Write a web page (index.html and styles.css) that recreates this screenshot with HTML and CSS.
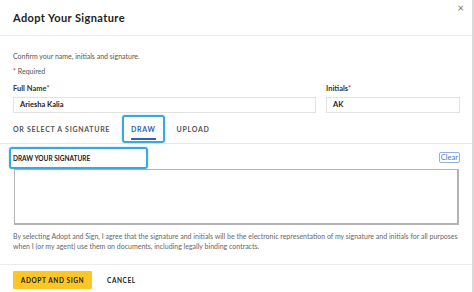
FILE: index.html
```
<!DOCTYPE html>
<html lang="en">
<head>
    <meta charset="UTF-8">
    <meta name="viewport" content="width=device-width, initial-scale=1.0">
    <title>Adopt Your Signature</title>
    <link rel="stylesheet" href="styles.css">
</head>
<body>

    <div class="modal">

        <div class="modal-header">
            <h1>Adopt Your Signature</h1>
            <span class="close">&times;</span>
        </div>

        <div class="modal-body">
            <p class="intro">Confirm your name, initials and signature.</p>
            <p class="required"><span class="star">*</span> Required</p>

            <div class="fields">
                <div class="field field-name">
                    <label>Full Name<span class="star">*</span></label>
                    <div class="input">Ariesha Kalia</div>
                </div>
                <div class="field field-initials">
                    <label>Initials<span class="star">*</span></label>
                    <div class="input">AK</div>
                </div>
            </div>

            <div class="tabs">
                <span class="tab-title">OR SELECT A SIGNATURE</span>
                <span class="tab active">DRAW</span>
                <span class="tab">UPLOAD</span>
            </div>

            <div class="draw-head">
                <span class="draw-label">DRAW YOUR SIGNATURE</span>
                <span class="clear">Clear</span>
            </div>
            <div class="canvas"></div>

            <p class="legal">By selecting Adopt and Sign, I agree that the signature and initials will be the electronic representation of my signature and initials for all purposes when I (or my agent) use them on documents, including legally binding contracts.</p>
        </div>

        <div class="modal-footer">
            <button class="btn-primary">ADOPT AND SIGN</button>
            <button class="btn-link">CANCEL</button>
        </div>

    </div>

</body>
</html>
```

FILE: styles.css
```
body {
    margin: 0;
    background-color: #fff;
    font-family: Lato, "Noto Sans", sans-serif;
    color: #333;
}

.modal {
    width: 472px;
    height: 292px;
    border-right: 2px solid #d9d9d9;
    position: relative;
}

.modal-header {
    height: 35px;
    display: flex;
    align-items: center;
    padding-left: 13px;
    border-bottom: 1px solid #ececec;
}

.modal-header h1 {
    margin: 0;
    font-size: 11px;
    font-weight: 700;
    color: #222;
    letter-spacing: 0.4px;
}

.close {
    position: absolute;
    top: 1px;
    right: 8px;
    font-size: 11px;
    color: #777;
}

.modal-body {
    padding: 0 12px 0 13px;
}

.intro, .required {
    margin: 0;
    font-size: 7px;
    line-height: 10px;
    color: #555;
}

.intro {
    padding-top: 15px;
}

.required {
    margin-top: 5px;
}

.star {
    color: #d0343a;
}

.fields {
    display: flex;
    gap: 10px;
    margin-top: 8px;
}

.field label {
    display: block;
    font-size: 7.5px;
    line-height: 10px;
    font-weight: 700;
    color: #333;
    margin-bottom: 3px;
}

.field-name {
    width: 303px;
}

.field-initials {
    width: 134px;
}

.input {
    height: 16px;
    box-sizing: border-box;
    border: 1px solid #e2e2e2;
    padding-left: 6px;
    font-size: 7.5px;
    font-weight: 700;
    line-height: 14px;
    color: #222;
}

.tabs {
    display: flex;
    align-items: center;
    height: 29px;
    margin: 2px -12px 0 -13px;
    padding-left: 13px;
    border-bottom: 1px solid #e8e8e8;
    box-sizing: border-box;
}

.tab-title, .tab {
    font-size: 7px;
    font-weight: 700;
    letter-spacing: 0.7px;
    color: #555;
}

.tab-title {
    margin-right: 12px;
}

.tab {
    margin-right: 12px;
}

.tab.active {
    height: 28px;
    box-sizing: border-box;
    padding: 0 7px;
    display: flex;
    align-items: center;
    color: #2f62b8;
    border: 2px solid #3aa8dc;
    border-radius: 3px;
    box-shadow: 0 0 2px rgba(58, 168, 220, 0.5);
    position: relative;
}

.tab.active::after {
    content: "";
    position: absolute;
    left: 7px;
    right: 7px;
    bottom: 1px;
    height: 2px;
    background-color: #2f62b8;
}

.draw-head {
    display: flex;
    justify-content: space-between;
    align-items: center;
    margin-top: 3px;
}

.draw-label {
    margin-left: -4px;
    width: 139px;
    height: 22px;
    box-sizing: border-box;
    border: 2px solid #3aa8dc;
    border-radius: 3px;
    box-shadow: 0 0 2px rgba(58, 168, 220, 0.5);
    padding-left: 2px;
    display: flex;
    align-items: center;
    font-size: 6.5px;
    font-weight: 700;
    color: #222;
}

.clear {
    font-size: 7.5px;
    color: #4a78c8;
    border: 1px solid #8fb0e0;
    border-radius: 2px;
    padding: 0 1px;
    line-height: 9px;
    margin-top: -2px;
}

.canvas {
    height: 53px;
    margin: 0 1px 0 1px;
    border: 1px solid #b3b3b3;
    border-right-width: 2px;
    border-bottom-width: 2px;
}

.legal {
    margin: 6px 0 0 0;
    font-size: 7px;
    line-height: 10px;
    color: #666;
}

.modal-footer {
    margin-top: 13px;
    border-top: 1px solid #ececec;
    padding: 6px 13px 0;
    display: flex;
    align-items: center;
    gap: 15px;
}

.btn-primary, .btn-link {
    font-family: Lato, "Noto Sans", sans-serif;
    font-size: 6.5px;
    font-weight: 700;
    letter-spacing: 0.6px;
    color: #222;
    border: none;
    cursor: pointer;
}

.btn-primary {
    width: 79px;
    height: 18px;
    background-color: #fcc724;
    border-radius: 1px;
}

.btn-link {
    background: none;
    padding: 0;
}
```
